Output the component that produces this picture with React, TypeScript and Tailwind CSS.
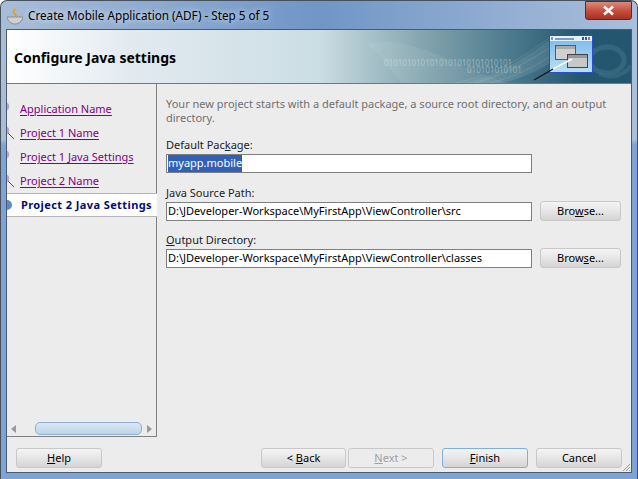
const font = { fontFamily: '"Noto Sans", sans-serif' }

const steps = ['Application Name', 'Project 1 Name', 'Project 1 Java Settings', 'Project 2 Name']

function Button({ children, className = '' }: { children: React.ReactNode; className?: string }) {
  return (
    <div className={`flex h-[20px] items-center justify-center rounded-[3px] border border-[#c8c8c8] bg-gradient-to-b from-[#f4f4f4] via-[#e6e6e6] to-[#d4d4d4] text-[11px] text-black ${className}`}>
      <span>{children}</span>
    </div>
  )
}

function Field({ label, value, selected }: { label: React.ReactNode; value: string; selected?: boolean }) {
  return (
    <div>
      <div className="h-[15px] text-[11px] leading-[15px] text-[#222]">{label}</div>
      <div className="mt-[2px] flex h-[19px] w-[366px] items-center border border-[#7f7f7f] bg-white pl-[1px] text-[11px] text-black">
        {selected ? <span className="bg-[#3161b5] text-white">{value}</span> : value}
      </div>
    </div>
  )
}

function BannerArt() {
  return (
    <svg width="626" height="54" viewBox="0 0 626 54" className="absolute left-0 top-0">
      <path d="M360 14C410 4 440 36 505 54L395 54C385 40 372 25 360 14Z" fill="#ffffff" opacity="0.07" />
      <path d="M450 54C490 46 515 30 545 8L548 30C530 42 510 50 490 54Z" fill="#ffffff" opacity="0.1" />
      <path d="M445 54C490 44 515 28 545 6M465 54C500 44 525 30 548 14M480 54C510 46 530 36 546 24" stroke="#ffffff" strokeWidth="0.5" fill="none" opacity="0.25" />
      <ellipse cx="600" cy="30" rx="17" ry="13" fill="none" stroke="#3f7288" strokeWidth="5" opacity="0.6" />
      <path d="M592 44C606 50 618 44 624 36" stroke="#3f7288" strokeWidth="4" fill="none" opacity="0.5" />
      <defs>
        <linearGradient id="win" x1="0" y1="0" x2="0" y2="1">
          <stop offset="0" stopColor="#7ab8ea" />
          <stop offset="1" stopColor="#b8e0f8" />
        </linearGradient>
      </defs>
      <rect x="542.5" y="5.5" width="43" height="37" fill="url(#win)" stroke="#2a50c8" />
      <rect x="543" y="6" width="42" height="5" fill="#e4f0fa" />
      <rect x="544" y="7" width="2" height="3" fill="#7a9ccc" />
      <rect x="548" y="8" width="19" height="2" fill="#7a9ccc" />
      <rect x="575" y="7" width="2" height="3" fill="#2a50c8" />
      <rect x="578" y="7" width="2" height="3" fill="#2a50c8" />
      <rect x="581" y="7" width="2" height="3" fill="#e06030" />
      <rect x="548.5" y="15.5" width="20" height="14" fill="#d0d0d0" stroke="#5a5a5a" />
      <rect x="549" y="16" width="19" height="3" fill="#aaa" />
      <rect x="560.5" y="24.5" width="20" height="13" fill="#c8c8c8" stroke="#444" />
      <rect x="561" y="25" width="19" height="3" fill="#999" />
      <path d="M527 50L546 39" stroke="#111" strokeWidth="1.3" />
      <path d="M546 39L565 29" stroke="#fff" strokeWidth="1.8" />
    </svg>
  )
}

function Marker({ tail }: { tail: boolean }) {
  return (
    <svg width="8" height="12" viewBox="0 0 8 12" className="absolute left-0 top-[6px]">
      <path d="M0 0C3 0 3 7 0 7Z" fill="#b8a6d2" />
      {tail && <path d="M1 6L7 12" stroke="#5a4a80" strokeWidth="1" />}
    </svg>
  )
}

export default function App() {
  return (
    <div style={font} className="relative flex h-[479px] w-[638px] flex-col overflow-hidden rounded-t-[7px] border-x border-t border-[#47515e] bg-[linear-gradient(180deg,transparent_0,transparent_29%,#7fa4d4_30%,#7fa4d4_100%),linear-gradient(90deg,#a9bdd8,#7096c6_50%,#a9bfdb)] px-[5px] pb-[6px]">
      {/* title bar */}
      <div className="flex h-[28px] shrink-0 items-start justify-between">
        <div className="flex h-[28px] items-center gap-[5px] pl-[1px] pt-[2px]">
          <svg width="16" height="17" viewBox="0 0 16 17">
            <path d="M0 9H16C15 14 11 16 8 16S1 14 0 9Z" fill="#cfcfcf" stroke="#777" strokeWidth="0.7" />
            <path d="M7 1c3 1-3 2 0 4s-1 1 3 3" stroke="#e0a020" strokeWidth="1.6" fill="none" />
          </svg>
          <span className="text-[11.7px] text-black [text-shadow:0_0_6px_#ffffff]">Create Mobile Application (ADF) - Step 5 of 5</span>
        </div>
        <div className="flex h-[19px] w-[47px] items-center justify-center rounded-b-[3px] border border-[#5a2a2a] bg-gradient-to-b from-[#d98a7c] via-[#c8503e] to-[#a83020]">
          <svg width="13" height="11" viewBox="0 0 13 11">
            <path d="M2 1.5L11 9.5M11 1.5L2 9.5" stroke="#fff" strokeWidth="2.6" />
          </svg>
        </div>
      </div>

      <div className="flex min-h-0 flex-1 flex-col border border-[#4a5a70] bg-[#ececec]">
        {/* banner */}
        <div className="relative flex h-[54px] shrink-0 items-center overflow-hidden border-b border-[#777] bg-[linear-gradient(90deg,#ffffff_0%,#e2eaf0_20%,#cbdee4_50%,#86a7b0_66%,#47768a_82%,#25566f_92%,#25566f_100%)] pl-[7px] pt-[1px]">
          <BannerArt />
          <span className="absolute left-[377px] top-[30px] text-[8px] leading-[6px] text-white/35">0101010101010101010101010101</span>
          <span className="absolute left-[460px] top-[37px] text-[8px] leading-[6px] text-white/35">010101010101</span>
          <span className="relative text-[14px] font-bold text-black">Configure Java settings</span>
        </div>

        <div className="flex min-h-0 flex-1 flex-col">
          <div className="flex h-[353px] shrink-0">
            {/* step list */}
            <div className="flex w-[150px] shrink-0 flex-col border-b border-r border-[#808080] pt-[13px] text-[11px]">
              {steps.map((s, i) => (
                <div key={s} className="relative flex h-[24px] items-center pl-[13px]">
                  <Marker tail={i % 2 === 1} />
                  <span className="whitespace-nowrap text-[#800080] underline underline-offset-2">{s}</span>
                </div>
              ))}
              <div className="relative -mr-[1px] flex h-[24px] items-center border-y border-[#b5b5b5] bg-white pl-[14px]">
                <span className="absolute left-0 top-[6px] h-[10px] w-[5px] rounded-r-full bg-[#5a8ad0]" />
                <span className="whitespace-nowrap font-bold tracking-[0.4px] text-[#000e78]">Project 2 Java Settings</span>
              </div>
              <div className="mt-auto flex h-[15px] items-center pl-[4px]">
                <span className="h-0 w-0 border-y-[4px] border-r-[5px] border-y-transparent border-r-[#999]" />
                <span className="ml-[19px] h-[13px] w-[107px] rounded-[5px] border border-[#8fb0d0] bg-gradient-to-b from-[#dbe7f3] to-[#bfd4e9]" />
                <span className="ml-[5px] h-0 w-0 border-y-[4px] border-l-[5px] border-y-transparent border-l-[#999]" />
              </div>
            </div>

            {/* form */}
            <div className="min-w-0 flex-1 pl-[9px] pt-[13px]">
              <p className="w-[452px] text-[11px] leading-[14px] text-[#707070]">
                Your new project starts with a default package, a source root directory, and an output directory.
              </p>
              <div className="mt-[12px]">
                <Field label={<>Default Pac<u>k</u>age:</>} value="myapp.mobile" selected />
              </div>
              <div className="mt-[12px] flex items-end gap-[8px]">
                <Field label={<><u>J</u>ava Source Path:</>} value="D:\JDeveloper-Workspace\MyFirstApp\ViewController\src" />
                <Button className="w-[81px]">Bro<u>w</u>se...</Button>
              </div>
              <div className="mt-[11px] flex items-end gap-[8px]">
                <Field label={<><u>O</u>utput Directory:</>} value="D:\JDeveloper-Workspace\MyFirstApp\ViewController\classes" />
                <Button className="w-[81px]">Brow<u>s</u>e...</Button>
              </div>
            </div>
          </div>

          {/* footer buttons */}
          <div className="flex items-center justify-between pl-[9px] pr-[9px] pt-[11px]">
            <Button className="w-[86px]"><u>H</u>elp</Button>
            <div className="flex gap-[8px]">
              <div className="flex gap-[2px]">
                <Button className="w-[85px]">&lt; <u>B</u>ack</Button>
                <div className="flex h-[20px] w-[86px] items-center justify-center rounded-[3px] border border-[#c8c8c8] bg-[#ececec] text-[11px] text-[#a0a0a0]"><span><u>N</u>ext &gt;</span></div>
              </div>
              <Button className="w-[86px] !border-[#7fb0dc]"><u>F</u>inish</Button>
              <Button className="w-[86px]">Cancel</Button>
            </div>
          </div>
        </div>
      </div>

      {/* resize grip */}
      <svg width="9" height="9" viewBox="0 0 9 9" className="absolute bottom-[7px] right-[6px]">
        <path d="M8 1L1 8M8 4L4 8M8 7L7 8" stroke="#9a9a9a" strokeWidth="1" />
      </svg>
    </div>
  )
}
